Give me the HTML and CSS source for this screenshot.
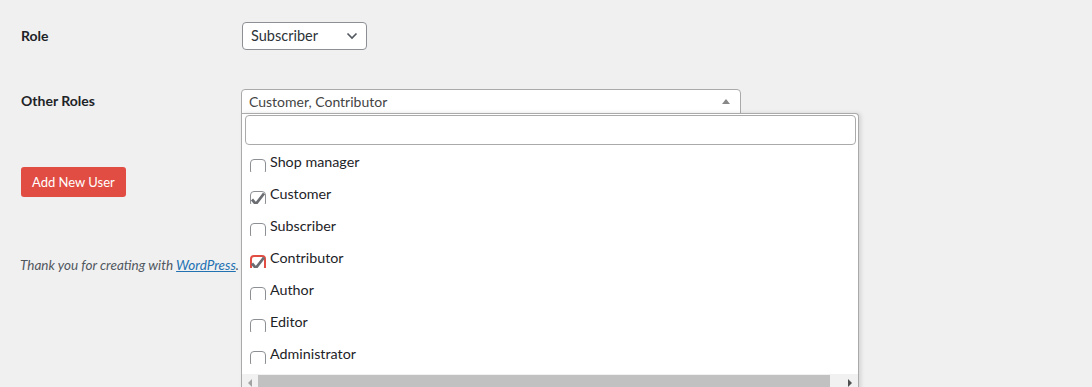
FILE: index.html
```html
<!DOCTYPE html>
<html>
<head>
<meta charset="utf-8">
<link rel="stylesheet" href="styles.css">
</head>
<body>
<div class="page">
  <div class="form-row row-role">
    <div class="label">Role</div>
    <div class="select">
      <span>Subscriber</span>
      <svg class="chev" width="12" height="8" viewBox="0 0 12 8"><polyline points="1.5,1.5 6,6 10.5,1.5" fill="none" stroke="#50575e" stroke-width="1.6"/></svg>
    </div>
  </div>
  <div class="form-row row-other">
    <div class="label">Other Roles</div>
    <div class="s2">
      <div class="s2-sel">
        <span class="s2-text">Customer, Contributor</span>
        <span class="s2-arrow"></span>
      </div>
      <div class="s2-drop">
        <div class="s2-search"><div class="s2-input"></div></div>
        <ul class="s2-list">
          <li class="opt"><span class="cbwrap"><span class="cb"></span></span><span>Shop manager</span></li>
          <li class="opt"><span class="cbwrap"><span class="cb"><svg class="tick" width="18" height="18" viewBox="0 0 18 18"><polyline points="3,8.5 6.8,13 15,2.5" fill="none" stroke="#6a6d72" stroke-width="2.8"/></svg></span></span><span>Customer</span></li>
          <li class="opt"><span class="cbwrap"><span class="cb"></span></span><span>Subscriber</span></li>
          <li class="opt"><span class="cbwrap"><span class="cb cb-focus"><svg class="tick" width="18" height="18" viewBox="0 0 18 18"><polyline points="3,8.5 6.8,13 15,2.5" fill="none" stroke="#6a6d72" stroke-width="2.8"/></svg></span></span><span>Contributor</span></li>
          <li class="opt"><span class="cbwrap"><span class="cb"></span></span><span>Author</span></li>
          <li class="opt"><span class="cbwrap"><span class="cb"></span></span><span>Editor</span></li>
          <li class="opt"><span class="cbwrap"><span class="cb"></span></span><span>Administrator</span></li>
        </ul>
        <div class="hscroll">
          <span class="sb-btn"><span class="tri-left"></span></span>
          <span class="sb-thumb"></span>
          <span class="sb-track"></span>
          <span class="sb-btn"><span class="tri-right"></span></span>
        </div>
      </div>
    </div>
  </div>
  <div class="btn-row"><span class="btn">Add New User</span></div>
  <p class="footer">Thank you for creating with <a href="#">WordPress</a>.</p>
</div>
</body>
</html>
```
FILE: styles.css
```css
html, body {
  margin: 0;
  padding: 0;
  background: #f0f0f1;
  overflow: hidden;
  height: 387px;
}
body {
  font-family: "Lato", "Liberation Sans", sans-serif;
  color: #1d2327;
  font-size: 14px;
}
.page {
  padding: 22px 0 0 20px;
}
.form-row {
  display: flex;
  align-items: center;
}
.label {
  font-weight: 700;
  font-size: 14px;
  line-height: 16px;
  padding-left: 1px;
  box-sizing: border-box;
  width: 222px;
  color: #1d2327;
}
.row-role {
  height: 28px;
}
.select {
  box-sizing: border-box;
  width: 125px;
  height: 28px;
  border: 1px solid #8c8f94;
  border-radius: 4px;
  background: #fff;
  display: flex;
  align-items: center;
  justify-content: space-between;
  padding: 0 8px 1px 8px;
  color: #2c3338;
  font-size: 14.5px;
}
.chev {
  display: block;
  margin-top: 1px;
}
.row-other {
  margin-top: 39px;
  height: 24px;
}
.s2 {
  position: relative;
  width: 500px;
  height: 24px;
  margin-left: -1px;
}
.s2-sel {
  box-sizing: border-box;
  height: 25px;
  border: 1px solid #aaa;
  border-radius: 4px 4px 0 0;
  background: #fff;
  display: flex;
  align-items: center;
  justify-content: space-between;
  padding: 0 10px 1px 7px;
  color: #444;
}
.s2-arrow {
  width: 0;
  height: 0;
  border-left: 4px solid transparent;
  border-right: 4px solid transparent;
  border-bottom: 5px solid #888;
}
.s2-drop {
  position: absolute;
  left: 0;
  top: 24px;
  box-sizing: border-box;
  width: 618px;
  border: 1px solid #aaa;
  border-bottom: none;
  border-radius: 0 4px 0 0;
  background: #fff;
  box-shadow: 2px 0 4px rgba(0,0,0,0.12);
}
.s2-search {
  padding: 1px 2px 0 3px;
}
.s2-input {
  box-sizing: border-box;
  height: 30px;
  border: 1px solid #aaa;
  border-radius: 4px;
  background: #fff;
}
.s2-list {
  list-style: none;
  margin: 0;
  padding: 0;
  height: 229px;
  overflow: hidden;
}
.opt {
  height: 32px;
  display: flex;
  align-items: center;
  padding-left: 8px;
  color: #1d2327;
  font-size: 14.3px;
}
.cbwrap {
  display: block;
  width: 16px;
  height: 13px;
  overflow: hidden;
  margin-right: 4px;
  margin-top: 9px;
}
.cb {
  display: block;
  box-sizing: border-box;
  width: 16px;
  height: 16px;
  border: 1px solid #8c8f94;
  border-radius: 4px;
  position: relative;
}
.cb-focus {
  border: 2px solid #e14d43;
}
.tick {
  position: absolute;
  left: -2px;
  top: -1px;
}
.cb-focus .tick {
  left: -3px;
  top: -2px;
}
.hscroll {
  display: flex;
  height: 17px;
  background: #f1f1f1;
}
.sb-btn {
  width: 16px;
  height: 17px;
  display: flex;
  align-items: center;
  justify-content: center;
}
.sb-thumb {
  width: 572px;
  height: 13px;
  margin-top: 1px;
  background: #c1c1c1;
}
.sb-track {
  flex: 1;
}
.tri-left {
  width: 0;
  height: 0;
  border-top: 4px solid transparent;
  border-bottom: 4px solid transparent;
  border-right: 4px solid #a3a3a3;
}
.tri-right {
  width: 0;
  height: 0;
  border-top: 4px solid transparent;
  border-bottom: 4px solid transparent;
  border-left: 4px solid #505050;
}
.btn-row {
  margin-top: 54px;
  margin-left: 1px;
}
.btn {
  display: inline-flex;
  align-items: center;
  box-sizing: border-box;
  height: 30px;
  padding: 0 11px 1px 11px;
  background: #e14d43;
  color: #fff;
  border-radius: 3px;
  font-size: 13px;
}
.footer {
  margin: 58px 0 0 0;
  font-size: 13.5px;
  font-style: italic;
  color: #50575e;
  line-height: 20px;
}
.footer a {
  color: #2271b1;
}
```
